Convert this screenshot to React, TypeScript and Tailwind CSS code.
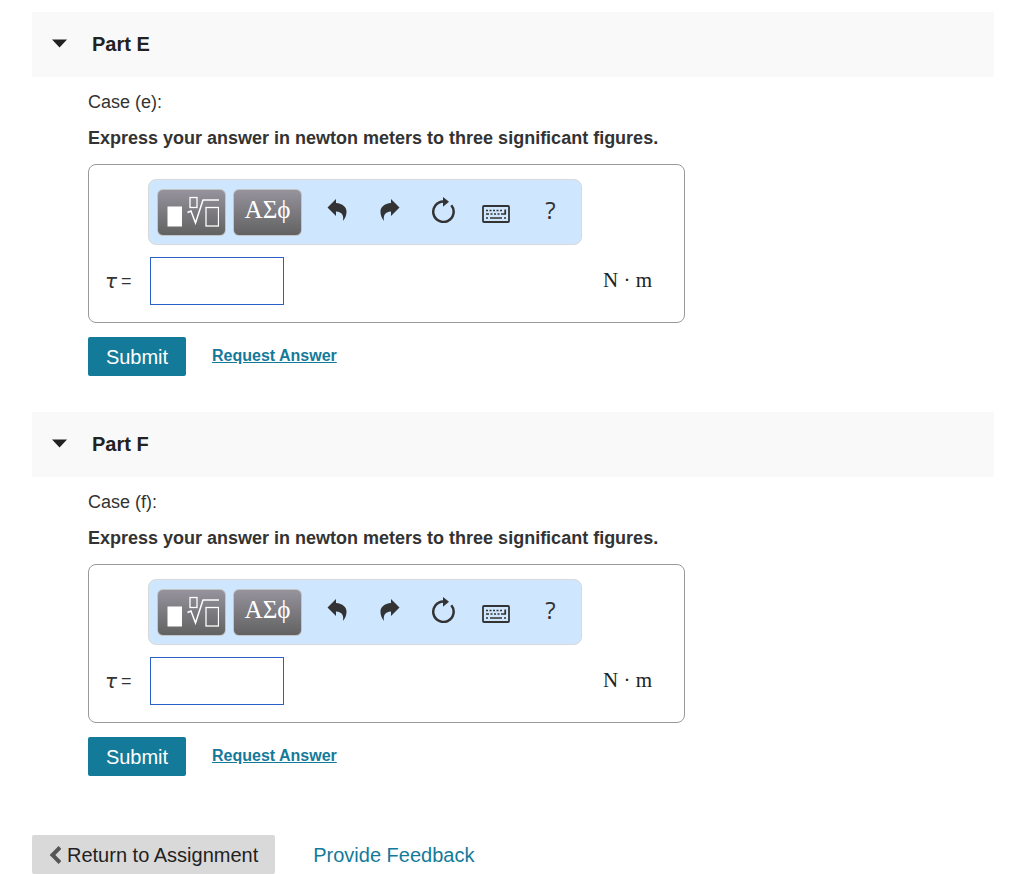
import React from 'react';

const parts = [
  { id: 'e', title: 'Part E', label: 'Case (e):' },
  { id: 'f', title: 'Part F', label: 'Case (f):' },
];

const TemplateIcon = () => (
  <svg width="54" height="32" viewBox="0 0 54 32" fill="none" stroke="#fff" className="shrink-0" aria-hidden="true">
    <rect x="2.500" y="10.500" width="14.500" height="20" fill="#fff" stroke="none" />
    <rect x="25" y="1.500" width="7" height="10" strokeWidth="1.3" />
    <path d="M22.500 16.500L26 15L30.500 27L38 4H54" strokeWidth="1.5" />
    <rect x="41" y="11.500" width="12.500" height="18.500" strokeWidth="1.3" />
  </svg>
);

const UndoIcon = () => (
  <svg width="20" height="22" viewBox="0 0 20 22" fill="#333" aria-hidden="true">
    <path d="M0.500 8.500L9 0V4C15.500 4.500 20 8 19.500 13.500C19.200 17 18 19.500 16 22C16.800 16.500 15.500 13 9 12.500V17Z" />
  </svg>
);

const RedoIcon = () => (
  <svg width="20" height="22" viewBox="0 0 20 22" fill="#333" aria-hidden="true">
    <path d="M19.500 8.500L11 0V4C4.500 4.500 0 8 0.500 13.500C0.800 17 2 19.500 4 22C3.200 16.500 4.500 13 11 12.500V17Z" />
  </svg>
);

const ResetIcon = () => (
  <svg width="24" height="26" viewBox="0 0 24 26" fill="none" aria-hidden="true">
    <path d="M12.300 4.500A10.200 10.200 0 1 0 20.300 8.200" stroke="#333" strokeWidth="2.5" />
    <path d="M12 0L18 4.800L12 9.800Z" fill="#333" />
  </svg>
);

const KeyboardIcon = () => (
  <svg width="28" height="18" viewBox="0 0 28 18" fill="none" stroke="#333" aria-hidden="true">
    <rect x="1" y="1" width="26" height="16" rx="1" strokeWidth="1.8" />
    <path d="M4 5.500H6M7.500 5.500H9.500M11 5.500H13M14.500 5.500H16.500M18 5.500H20" strokeWidth="1.6" />
    <path d="M4 9H7M8.500 9H10.500M12 9H14M15.500 9H17.500M19 9H24" strokeWidth="1.6" />
    <path d="M23.200 4.500V9" strokeWidth="1.8" />
    <path d="M4 13H6M8 13H20M22 13H24" strokeWidth="1.6" />
  </svg>
);

const Toolbar = () => {
  const dark =
    'flex h-[47px] w-[69px] shrink-0 items-center justify-center rounded-md border border-[#c4c4c4] bg-linear-to-b from-[#96939d] to-[#626262] text-white';
  const plain = 'flex h-12 w-[53px] shrink-0 items-center justify-center';

  return (
    <div className="ml-[43px] flex h-[66px] max-w-[434px] items-center rounded-lg border border-[#d9d9d9] bg-[#cfe6ff] px-2">
      <button type="button" aria-label="Templates" className={dark}>
        <TemplateIcon />
      </button>
      <button
        type="button"
        aria-label="Symbols"
        className={`${dark} ml-[7px] pb-1 font-['Liberation_Serif',serif] text-[25px]`}
      >
        ΑΣϕ
      </button>
      <div className="ml-2 flex items-center">
        <button type="button" aria-label="Undo" className={`${plain} pb-1`}><UndoIcon /></button>
        <button type="button" aria-label="Redo" className={`${plain} pb-1`}><RedoIcon /></button>
        <button type="button" aria-label="Reset" className={`${plain} pb-1`}><ResetIcon /></button>
        <button type="button" aria-label="Keyboard shortcuts" className={`${plain} pt-1`}><KeyboardIcon /></button>
        <button type="button" aria-label="Help" className={`${plain} pb-1 pl-1 font-['Open_Sans',sans-serif] text-2xl text-[#333]`}>?</button>
      </div>
    </div>
  );
};

const Part = ({ id, title, label }: { id: string; title: string; label: string }) => {
  return (
    <section className="mb-9">
      <h2 className="bg-[#f9f9f9]">
        <button type="button" aria-expanded="true" className="flex h-[65px] w-full items-center px-5 pb-0.5 text-xl font-bold text-[#222]">
          <svg width="15" height="9" viewBox="0 0 15 9" fill="#222" aria-hidden="true">
            <path d="M0 0.500H15L7.500 8.500Z" />
          </svg>
          <span className="ml-[25px]">{title}</span>
        </button>
      </h2>
      <div className="pt-[13px] pl-14">
        <p className="text-lg leading-6">{label}</p>
        <p className="mt-3 text-lg leading-6 font-bold">
          Express your answer in newton meters to three significant figures.
        </p>
        <div className="mt-[14px] max-w-[597px] rounded-lg border border-[#999] px-4 pt-[14px] pb-[17px]">
          <Toolbar />
          <div className="mt-3 flex items-center pr-4">
            <label htmlFor={`answer-${id}`} className="flex w-[45px] items-center gap-1 leading-6">
              <i className="font-['DejaVu_Sans',sans-serif] text-xl">τ</i>
              <span className="text-lg">=</span>
            </label>
            <input id={`answer-${id}`} type="text" className="h-12 w-[134px] border border-[#2a5fc9] px-2 outline-none" />
            <span className="ml-auto pb-0.5 font-['Liberation_Serif',serif] text-[21px] leading-6 text-[#222]">N · m</span>
          </div>
        </div>
        <div className="mt-[14px] flex items-center">
          <button type="button" className="h-[39px] w-[98px] rounded-xs bg-[#147a9a] text-xl text-white">
            Submit
          </button>
          <a href="#" className="ml-[26px] pb-0.5 text-base font-bold text-[#147a9a] underline">
            Request Answer
          </a>
        </div>
      </div>
    </section>
  );
};

const App = () => {
  return (
    <main className="bg-white pt-3 pr-[30px] pl-8 font-['Liberation_Sans',Arial,sans-serif] text-[#333]">
      {parts.map((part) => (
        <Part key={part.id} {...part} />
      ))}
      <footer className="mt-[59px] flex items-center text-xl">
        <button type="button" className="flex h-[39px] items-center rounded-xs bg-[#d9d9d9] px-[17px] text-[#222]">
          <svg width="12" height="18" viewBox="0 0 12 18" fill="none" stroke="#555" strokeWidth="4" aria-hidden="true">
            <path d="M11 1.500L3.500 9L11 16.500" />
          </svg>
          <span className="ml-[6px]">Return to Assignment</span>
        </button>
        <a href="#" className="ml-[38px] text-[#147a9a]">Provide Feedback</a>
      </footer>
    </main>
  );
};

export default App;
